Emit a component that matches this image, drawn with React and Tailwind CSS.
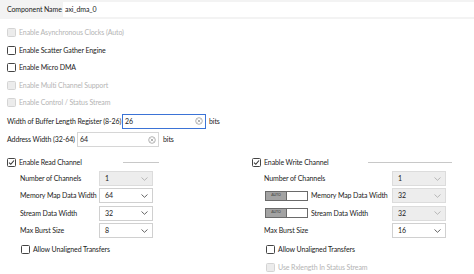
import React from "react";

const font = { fontFamily: 'Lato, "Open Sans", sans-serif' };

function Check({ checked = false, disabled = false }) {
  return (
    <div
      className={
        "w-[9px] h-[9px] shrink-0 rounded-[1.5px] border flex items-center justify-center " +
        (disabled ? "border-[#d4d4d4] bg-[#ececec]" : "border-[#444] bg-white")
      }
    >
      {checked && (
        <svg width="7" height="7" viewBox="0 0 7 7">
          <path d="M1 3.6 L2.8 5.3 L6 1.5" fill="none" stroke="#333" strokeWidth="1.1" />
        </svg>
      )}
    </div>
  );
}

function CheckRow({ label, checked, disabled, className = "" }) {
  return (
    <div className={"flex items-center gap-[3px] whitespace-nowrap " + className}>
      <Check checked={checked} disabled={disabled} />
      <span className={disabled ? "text-[#b4b4b4]" : "text-[#222]"}>{label}</span>
    </div>
  );
}

function Chevron({ color }) {
  return (
    <svg width="7" height="4" viewBox="0 0 7 4">
      <path d="M0.5 0.5 L3.5 3.3 L6.5 0.5" fill="none" stroke={color} strokeWidth="0.9" />
    </svg>
  );
}

function Select({ value, disabled }) {
  return (
    <div
      className={
        "w-[54px] h-[15px] border flex items-center justify-between pl-[5px] pr-[4px] shrink-0 " +
        (disabled ? "bg-[#ededed] border-[#dcdcdc]" : "bg-white border-[#d0d0d0]")
      }
    >
      <span className="text-[#222]">{value}</span>
      <Chevron color={disabled ? "#b0b0b0" : "#555"} />
    </div>
  );
}

function ClearIcon() {
  return (
    <svg width="8" height="8" viewBox="0 0 8 8">
      <circle cx="4" cy="4" r="3.3" fill="none" stroke="#a8a8a8" strokeWidth="0.9" />
      <path d="M2.6 2.6 L5.4 5.4 M5.4 2.6 L2.6 5.4" stroke="#a8a8a8" strokeWidth="0.9" />
    </svg>
  );
}

function AutoToggle() {
  return (
    <div className="w-[43px] h-[10px] border border-[#6a6a6a] bg-white flex shrink-0">
      <div className="w-[21px] h-full bg-[#a3a3a3] border-r border-[#6a6a6a] flex items-center justify-center">
        <span className="text-[3.5px] leading-none text-[#333] tracking-normal">AUTO</span>
      </div>
    </div>
  );
}

function Row({ label, children, labelW }) {
  return (
    <div className="h-[17.3px] flex items-center whitespace-nowrap">
      <div className={labelW + " shrink-0 flex items-center"}>{label}</div>
      {children}
    </div>
  );
}

export default function App() {
  return (
    <div
      className="w-[474px] h-[274px] bg-white text-[7px] leading-none tracking-[-0.1px] overflow-hidden text-[#222] whitespace-nowrap"
      style={font}
    >
      {/* top bar */}
      <div className="h-[19px] bg-[#f3f3f3] flex items-center">
        <span className="pl-[7px] w-[63px] shrink-0">Component Name</span>
        <div className="flex-1 h-[15px] bg-white flex items-center pl-[2px]">axi_dma_0</div>
      </div>

      <div className="pl-[7px] mt-[5px]">
        <div className="h-[17.5px] flex items-center">
          <CheckRow label="Enable Asynchronous Clocks (Auto)" disabled />
        </div>
        <div className="h-[17.5px] flex items-center">
          <CheckRow label="Enable Scatter Gather Engine" />
        </div>
        <div className="h-[17.5px] flex items-center">
          <CheckRow label="Enable Micro DMA" />
        </div>
        <div className="h-[17.5px] flex items-center">
          <CheckRow label="Enable Multi Channel Support" disabled />
        </div>
        <div className="h-[17.5px] flex items-center">
          <CheckRow label="Enable Control / Status Stream" disabled />
        </div>

        <div className="h-[17px] mt-[1px] flex items-center">
          <span className="w-[115px] shrink-0">Width of Buffer Length Register (8-26)</span>
          <div className="w-[84px] h-[15px] border border-[#3b73d6] flex items-center justify-between pl-[2px] pr-[2px]">
            <span>26</span>
            <ClearIcon />
          </div>
          <span className="ml-[3px]">bits</span>
        </div>
        <div className="h-[17px] mt-[1.5px] flex items-center">
          <span className="w-[70px] shrink-0">Address Width (32-64)</span>
          <div className="w-[82px] h-[15px] border border-[#d6d6d6] flex items-center justify-between pl-[2px] pr-[2px]">
            <span>64</span>
            <ClearIcon />
          </div>
          <span className="ml-[4px]">bits</span>
        </div>
      </div>

      {/* channels */}
      <div className="flex mt-[6px]">
        {/* read */}
        <div className="w-[245px] pl-[7px]">
          <div className="h-[16px] flex items-center">
            <CheckRow label="Enable Read Channel" checked className="w-[116px]" />
            <div className="w-[36px] h-px bg-[#c8c8c8]" />
          </div>
          <div className="pl-[13px]">
            <Row label="Number of Channels" labelW="w-[79px]">
              <Select value="1" disabled />
            </Row>
            <Row label="Memory Map Data Width" labelW="w-[79px]">
              <Select value="64" />
            </Row>
            <Row label="Stream Data Width" labelW="w-[79px]">
              <Select value="32" />
            </Row>
            <Row label="Max Burst Size" labelW="w-[79px]">
              <Select value="8" />
            </Row>
            <div className="h-[18px] mt-[1.5px] flex items-center pl-[1px]">
              <CheckRow label="Allow Unaligned Transfers" />
            </div>
          </div>
        </div>

        {/* write */}
        <div className="flex-1 pl-[7px]">
          <div className="h-[16px] flex items-center">
            <CheckRow label="Enable Write Channel" checked className="w-[116px]" />
            <div className="w-[84px] h-px bg-[#c8c8c8]" />
          </div>
          <div className="pl-[12px]">
            <Row label="Number of Channels" labelW="w-[128px]">
              <Select value="1" disabled />
            </Row>
            <Row
              label={
                <>
                  <div className="ml-[1px]"><AutoToggle /></div>
                  <span className="ml-[3px]">Memory Map Data Width</span>
                </>
              }
              labelW="w-[128px]"
            >
              <Select value="32" disabled />
            </Row>
            <Row
              label={
                <>
                  <div className="ml-[1px]"><AutoToggle /></div>
                  <span className="ml-[3px]">Stream Data Width</span>
                </>
              }
              labelW="w-[128px]"
            >
              <Select value="32" disabled />
            </Row>
            <Row label="Max Burst Size" labelW="w-[128px]">
              <Select value="16" />
            </Row>
            <div className="h-[18px] mt-[1.5px] flex items-center pl-[2px]">
              <CheckRow label="Allow Unaligned Transfers" />
            </div>
            <div className="h-[18px] flex items-center pl-[2px]">
              <CheckRow label="Use Rxlength In Status Stream" disabled />
            </div>
          </div>
        </div>
      </div>
    </div>
  );
}
